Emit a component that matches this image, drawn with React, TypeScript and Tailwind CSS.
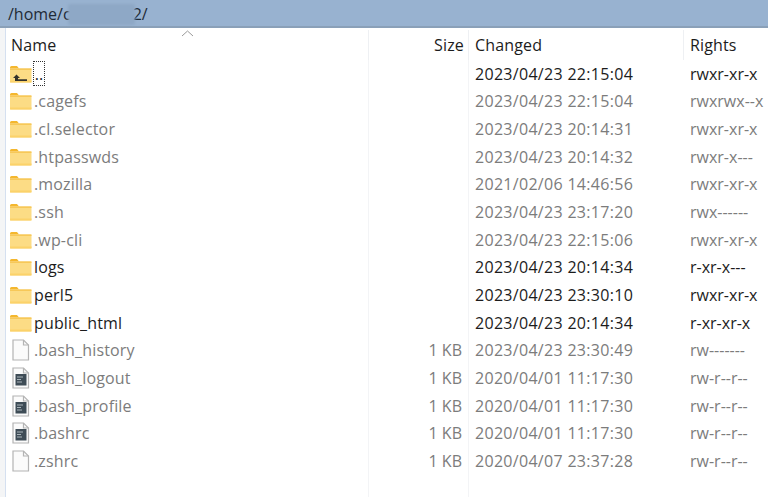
const FONT = "font-['Open_Sans','Noto_Sans',sans-serif]";

type Row = {
  name: string;
  size?: string;
  changed: string;
  rights: string;
  icon: "up" | "folder" | "file" | "doc";
  dim?: boolean;
};

const ROWS: Row[] = [
  { name: "..", changed: "2023/04/23 22:15:04", rights: "rwxr-xr-x", icon: "up" },
  { name: ".cagefs", changed: "2023/04/23 22:15:04", rights: "rwxrwx--x", icon: "folder", dim: true },
  { name: ".cl.selector", changed: "2023/04/23 20:14:31", rights: "rwxr-xr-x", icon: "folder", dim: true },
  { name: ".htpasswds", changed: "2023/04/23 20:14:32", rights: "rwxr-x---", icon: "folder", dim: true },
  { name: ".mozilla", changed: "2021/02/06 14:46:56", rights: "rwxr-xr-x", icon: "folder", dim: true },
  { name: ".ssh", changed: "2023/04/23 23:17:20", rights: "rwx------", icon: "folder", dim: true },
  { name: ".wp-cli", changed: "2023/04/23 22:15:06", rights: "rwxr-xr-x", icon: "folder", dim: true },
  { name: "logs", changed: "2023/04/23 20:14:34", rights: "r-xr-x---", icon: "folder" },
  { name: "perl5", changed: "2023/04/23 23:30:10", rights: "rwxr-xr-x", icon: "folder" },
  { name: "public_html", changed: "2023/04/23 20:14:34", rights: "r-xr-xr-x", icon: "folder" },
  { name: ".bash_history", size: "1 KB", changed: "2023/04/23 23:30:49", rights: "rw-------", icon: "file", dim: true },
  { name: ".bash_logout", size: "1 KB", changed: "2020/04/01 11:17:30", rights: "rw-r--r--", icon: "doc", dim: true },
  { name: ".bash_profile", size: "1 KB", changed: "2020/04/01 11:17:30", rights: "rw-r--r--", icon: "doc", dim: true },
  { name: ".bashrc", size: "1 KB", changed: "2020/04/01 11:17:30", rights: "rw-r--r--", icon: "doc", dim: true },
  { name: ".zshrc", size: "1 KB", changed: "2020/04/07 23:37:28", rights: "rw-r--r--", icon: "file", dim: true },
];

const Folder = ({ up }: { up?: boolean }) => (
  <svg width="22" height="18" viewBox="0 0 22 18">
    <path d="M0 2.5 Q0 1 1.5 1 H7 L9 3.5 H0 Z" fill="#f4b72e" />
    <rect x="0" y="3.5" width="21.5" height="14" rx="0.8" fill="#fcdc85" />
    <rect x="0" y="3.5" width="21.5" height="1.2" fill="#f5bf45" />
    <rect x="0" y="15.5" width="21.5" height="2" fill="#fbd26a" />
    {up && <path d="M6.5 9.5 L3 13 H5 V16 H17 V14.2 H8 V13 H10 Z" fill="#35332c" />}
  </svg>
);

const FileIcon = ({ doc }: { doc?: boolean }) => (
  <svg width="18" height="22" viewBox="0 0 18 22">
    <path d="M1 1 H11.5 L16.5 6 V21 H1 Z" fill="#fbfbfb" stroke="#b4b4b4" strokeWidth="1.2" />
    <path d="M11.5 1 V6 H16.5" fill="none" stroke="#b4b4b4" strokeWidth="1.2" />
    {doc && (
      <>
        <rect x="3.5" y="7" width="11" height="11.5" fill="#3e4c56" />
        <path d="M5 10 H11 M5 12.5 H9 M5 15 H10" stroke="#aab4ba" strokeWidth="1" />
      </>
    )}
  </svg>
);

const Sep = () => <div className="w-px self-stretch bg-[#eef0f3]" />;

export default function App() {
  return (
    <div className={`${FONT} relative flex h-[497px] w-[768px] flex-col overflow-hidden bg-white text-[16px]`}>
      {/* Barra de ruta */}
      <div className="flex h-[28px] shrink-0 items-center border-b-2 border-[#8aa0b8] bg-[#98b2d0] pl-2 pt-[1px] text-[16px] text-[#1f2a36]">
        /home/c<span className="w-[62px]" />2/
      </div>
      {/* Tapa del nombre de usuario */}
      <div className="absolute left-[68px] top-[4px] h-[21px] w-[67px] rounded-[2px] bg-[#8ea8c6] blur-[1px]" />

      <div className="flex min-h-0 flex-1 border-l-[5px] border-l-[#f4f5f6]">
        <div className="flex min-w-0 flex-1 flex-col border-l border-l-[#d5e0f0]">
          {/* Cabecera */}
          <div className="relative flex h-[32px] shrink-0 items-center pt-[2px] tracking-[0.15px] text-[#1c1c1c]">
            <div className="w-[362px] pl-[5px]">Name</div>
            <Sep />
            <div className="w-[99px] pr-[4px] text-right">Size</div>
            <Sep />
            <div className="w-[214px] pl-[6px]">Changed</div>
            <Sep />
            <div className="flex-1 pl-[6px]">Rights</div>
            <svg className="absolute left-[175px] top-[2px]" width="13" height="7" viewBox="0 0 13 7">
              <path d="M1 6 L6.5 1 L12 6" fill="none" stroke="#9a9a9a" strokeWidth="1" />
            </svg>
          </div>

          {/* Filas */}
          <div className="relative flex-1">
            <div className="absolute inset-y-0 left-[362px] w-px bg-[#f3f4f6]" />
            <div className="absolute inset-y-0 left-[462px] w-px bg-[#f3f4f6]" />
            {ROWS.map((r) => (
              <div key={r.name} className={`flex h-[27.65px] items-center ${r.dim ? "text-[#7c7c7c]" : "text-[#1c1c1c]"}`}>
                <div className="flex w-[363px] items-center">
                  <span className="flex w-[28px] shrink-0 justify-center pl-[1px]">
                    {r.icon === "up" && <Folder up />}
                    {r.icon === "folder" && <Folder />}
                    {r.icon === "file" && <FileIcon />}
                    {r.icon === "doc" && <FileIcon doc />}
                  </span>
                  {r.icon === "up" ? (
                    <span className="ml-[-1px] flex h-[25px] w-[12px] items-end justify-center border border-dotted border-[#333] leading-[22px]">..</span>
                  ) : (
                    <span className="tracking-[0.15px]">{r.name}</span>
                  )}
                </div>
                <div className="w-[100px] pr-[7px] text-right">{r.size}</div>
                <div className="w-[215px] pl-[6px] tracking-[0.3px]">{r.changed}</div>
                <div className="flex-1 pl-[6px]">{r.rights}</div>
              </div>
            ))}
          </div>
        </div>
      </div>
    </div>
  );
}
